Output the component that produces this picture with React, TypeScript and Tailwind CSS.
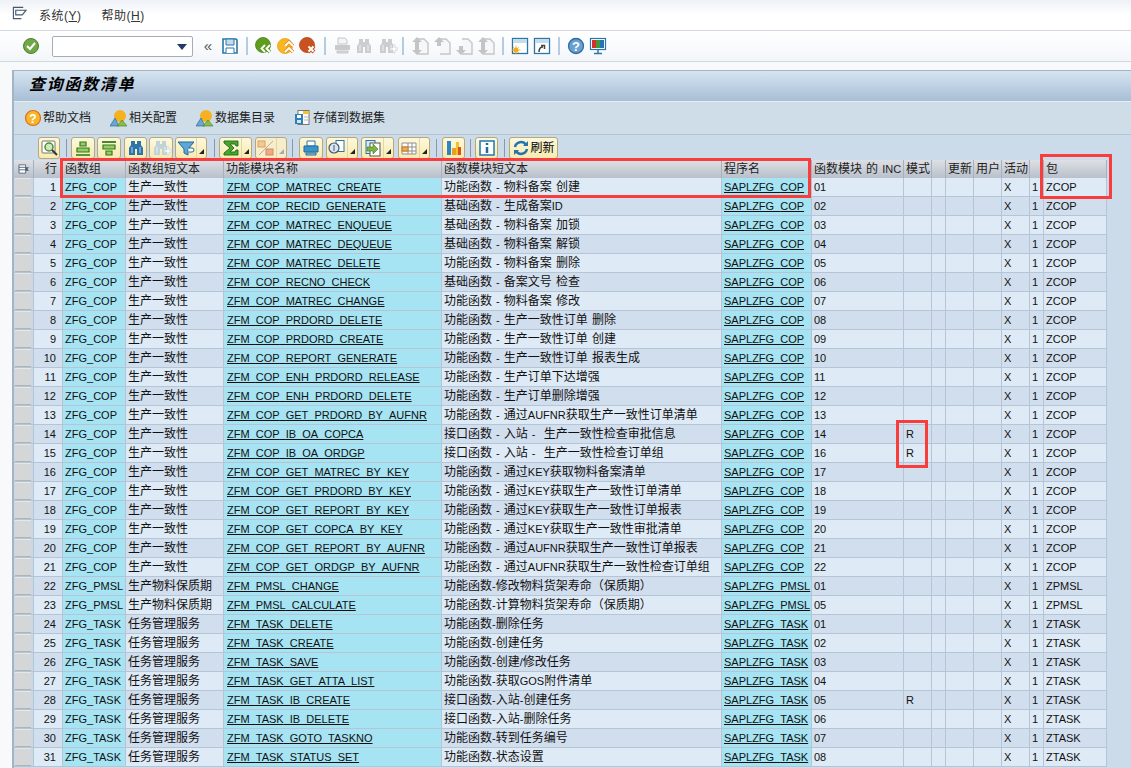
import type { ReactNode } from "react";

const COLS =
  "grid grid-cols-[20px_29px_63px_98px_218px_280px_90px_92px_28px_14px_28px_28px_28px_14px_63px] w-[1093px]";

const HEADERS = ["", "行", "函数组", "函数组短文本", "功能模块名称", "函数模块短文本", "程序名", "函数模块 的 INC", "模式", "", "更新", "用户", "活动", "", "包"];

type Row = [string, string, string, string, string];

const COP = "COP";
const rows: Row[] = [
  [COP, "MATREC_CREATE", "功能函数 - 物料备案 创建", "01", ""],
  [COP, "RECID_GENERATE", "基础函数 - 生成备案ID", "02", ""],
  [COP, "MATREC_ENQUEUE", "基础函数 - 物料备案 加锁", "03", ""],
  [COP, "MATREC_DEQUEUE", "基础函数 - 物料备案 解锁", "04", ""],
  [COP, "MATREC_DELETE", "功能函数 - 物料备案 删除", "05", ""],
  [COP, "RECNO_CHECK", "基础函数 - 备案文号 检查", "06", ""],
  [COP, "MATREC_CHANGE", "功能函数 - 物料备案 修改", "07", ""],
  [COP, "PRDORD_DELETE", "功能函数 - 生产一致性订单 删除", "08", ""],
  [COP, "PRDORD_CREATE", "功能函数 - 生产一致性订单 创建", "09", ""],
  [COP, "REPORT_GENERATE", "功能函数 - 生产一致性订单 报表生成", "10", ""],
  [COP, "ENH_PRDORD_RELEASE", "功能函数 - 生产订单下达增强", "11", ""],
  [COP, "ENH_PRDORD_DELETE", "功能函数 - 生产订单删除增强", "12", ""],
  [COP, "GET_PRDORD_BY_AUFNR", "功能函数 - 通过AUFNR获取生产一致性订单清单", "13", ""],
  [COP, "IB_OA_COPCA", "接口函数 - 入站 -  生产一致性检查审批信息", "14", "R"],
  [COP, "IB_OA_ORDGP", "接口函数 - 入站 -  生产一致性检查订单组", "16", "R"],
  [COP, "GET_MATREC_BY_KEY", "功能函数 - 通过KEY获取物料备案清单", "17", ""],
  [COP, "GET_PRDORD_BY_KEY", "功能函数 - 通过KEY获取生产一致性订单清单", "18", ""],
  [COP, "GET_REPORT_BY_KEY", "功能函数 - 通过KEY获取生产一致性订单报表", "19", ""],
  [COP, "GET_COPCA_BY_KEY", "功能函数 - 通过KEY获取生产一致性审批清单", "20", ""],
  [COP, "GET_REPORT_BY_AUFNR", "功能函数 - 通过AUFNR获取生产一致性订单报表", "21", ""],
  [COP, "GET_ORDGP_BY_AUFNR", "功能函数 - 通过AUFNR获取生产一致性检查订单组", "22", ""],
  ["PMSL", "CHANGE", "功能函数-修改物料货架寿命（保质期）", "01", ""],
  ["PMSL", "CALCULATE", "功能函数-计算物料货架寿命（保质期）", "05", ""],
  ["TASK", "DELETE", "功能函数-删除任务", "01", ""],
  ["TASK", "CREATE", "功能函数-创建任务", "02", ""],
  ["TASK", "SAVE", "功能函数-创建/修改任务", "03", ""],
  ["TASK", "GET_ATTA_LIST", "功能函数-获取GOS附件清单", "04", ""],
  ["TASK", "IB_CREATE", "接口函数-入站-创建任务", "05", "R"],
  ["TASK", "IB_DELETE", "接口函数-入站-删除任务", "06", ""],
  ["TASK", "GOTO_TASKNO", "功能函数-转到任务编号", "07", ""],
  ["TASK", "STATUS_SET", "功能函数-状态设置", "08", ""],
];

const groupText: Record<string, string> = { COP: "生产一致性", PMSL: "生产物料保质期", TASK: "任务管理服务" };

// latin runs are 11px, chinese runs 12px, like the SAP GUI font
function T({ children }: { children: string }) {
  return (
    <span className="whitespace-pre [word-spacing:1px]">
      {children.split(/([\u4e00-\u9fff（）]+)/).map((s, i) =>
        i % 2 ? (
          <span key={i} className="text-[12px]">
            {s}
          </span>
        ) : (
          <span key={i}>{s}</span>
        ),
      )}
    </span>
  );
}

function Cell({ children, cls = "" }: { children?: ReactNode; cls?: string }) {
  return (
    <div className={`flex items-center overflow-hidden whitespace-pre border-r border-b border-[#b6c5d6] pl-[2px] ${cls}`}>
      {children}
    </div>
  );
}

function Ic({ children }: { children: ReactNode }) {
  return (
    <svg viewBox="0 0 22 22" className="h-[22px] w-[22px] shrink-0">
      {children}
    </svg>
  );
}

const Sep = ({ ml = "ml-[5px]" }: { ml?: string }) => <div className={`h-[18px] w-[2px] shrink-0 bg-[#b4cbe0] ${ml}`} />;

function GrayPage({ up, down }: { up?: boolean; down?: boolean }) {
  return (
    <Ic>
      <path d="M9 4h6l4 4v11H9" fill="#f6f7f8" stroke="#c4c6c8" strokeWidth="1.400" />
      {up && <path d="M8 2l5 5h-3v4H6V7H3z" fill="#c2c4c6" />}
      {down && <path d="M8 20l5-5h-3v-4H6v4H3z" fill="#c2c4c6" />}
    </Ic>
  );
}

function Binoculars({ color, plus, edge }: { color: string; plus?: boolean; edge?: string }) {
  return (
    <Ic>
      <path
        d="M6 4h4v3h2V4h4v4l2 3v7h-6v-6h-2v6H4v-7l2-3z"
        fill={color}
        stroke={edge}
        strokeWidth="1"
      />
      <path d="M7 10v6M15 10v6" stroke="#fff" strokeOpacity=".45" strokeWidth="1.500" />
      {plus && <path d="M14 13h3v-3h2v3h3v2h-3v3h-2v-3h-3z" fill="#fff" stroke={edge ?? color} strokeWidth=".7" />}
    </Ic>
  );
}

function Mountain() {
  return (
    <svg viewBox="0 0 18 18" className="h-[18px] w-[18px] shrink-0">
      <circle cx="10" cy="7" r="6" fill="#f5b120" />
      <path d="M0 17l5-8 4 8z" fill="#6aa8d2" stroke="#1e5d8c" strokeWidth=".6" />
      <path d="M7 17l5-6 5 6z" fill="#86bf4c" stroke="#3f7a1e" strokeWidth=".6" />
    </svg>
  );
}

function Disk() {
  return (
    <svg viewBox="0 0 18 18" className="h-[18px] w-[18px] shrink-0">
      <rect x="4" y="1.500" width="11" height="14" fill="#fbfbfb" stroke="#777" />
      <rect x="9" y="2" width="6" height="3" fill="#f4c430" />
      <rect x="1" y="5" width="8" height="10" fill="#2e7fb5" />
      <rect x="3" y="6" width="4" height="3" fill="#fff" />
      <rect x="3" y="11" width="4" height="3" fill="#cfe4f2" />
      <path d="M10 8h4M10 11h4" stroke="#d9d9d9" strokeWidth="2" />
    </svg>
  );
}

function HelpOrange() {
  return (
    <svg viewBox="0 0 18 18" className="h-[18px] w-[18px] shrink-0">
      <circle cx="9" cy="9" r="7.500" fill="#f8b62a" stroke="#d9701a" strokeWidth="1.200" />
      <text x="9" y="13.500" textAnchor="middle" fontSize="12" fontWeight="700" fill="#fff" fontFamily="Liberation Sans">?</text>
    </svg>
  );
}

function AppBtn({ icon, label, w }: { icon: ReactNode; label: string; w: string }) {
  return (
    <div className={`flex items-center ${w}`}>
      {icon}
      <span className="ml-px text-[12px] text-[#222]">{label}</span>
    </div>
  );
}

function AlvBtn({ children, w, ml = "ml-[2px]", menu, dim }: { children?: ReactNode; w: string; ml?: string; menu?: boolean; dim?: boolean }) {
  return (
    <div
      className={`flex h-[22px] shrink-0 items-center rounded-[3px] border border-[#b9a877] ${dim ? "bg-[#f6eecb]" : "bg-linear-to-b from-[#fdf8dc] to-[#f7ebb0]"} ${w} ${ml}`}
    >
      <div className="flex min-w-0 flex-1 items-center justify-center">{children}</div>
      {menu && (
        <div className="relative h-full w-[10px] border-l border-[#e2d6a6]">
          <div className={`absolute right-[2px] bottom-[4px] h-0 w-0 border-b-[5px] border-l-[5px] border-l-transparent ${dim ? "border-b-[#aaa]" : "border-b-[#222]"}`} />
        </div>
      )}
    </div>
  );
}

const AlvSep = ({ ml }: { ml: string }) => <div className={`h-[18px] w-px shrink-0 bg-[#8d98a4] ${ml}`} />;

function Small({ children }: { children: ReactNode }) {
  return (
    <svg viewBox="0 0 18 18" className="h-[18px] w-[18px] shrink-0">
      {children}
    </svg>
  );
}

function Box({ x, y, w, h }: { x: string; y: string; w: string; h: string }) {
  return <div className={`absolute border-[3px] border-[#f93c3c] ${x} ${y} ${w} ${h}`} />;
}

export default function App() {
  return (
    <div className="relative flex h-[768px] w-[1131px] flex-col overflow-hidden bg-[#f7f9fb] font-['Liberation_Sans','Noto_Sans_CJK_SC',sans-serif] text-[11px] text-[#111]">
      {/* menu bar */}
      <div className="flex h-[31px] shrink-0 items-center border-b border-[#d0d7e1] bg-linear-to-b from-[#eef1f6] via-white to-white pt-[1px] pl-[12px]">
        <svg viewBox="0 0 16 16" className="mb-[4px] h-[15px] w-[15px]">
          <path d="M12 1.500H1.500v12H10M4 4.500h11l-4 5H4z" fill="none" stroke="#44586e" strokeWidth="1.200" />
        </svg>
        <span className="ml-[12px] text-[12px] tracking-[0.5px] text-[#333]">
          系统(<span className="underline">Y</span>)
        </span>
        <span className="ml-[20px] text-[12px] tracking-[0.5px] text-[#333]">
          帮助(<span className="underline">H</span>)
        </span>
      </div>

      {/* system toolbar */}
      <div className="flex h-[31px] shrink-0 items-center border-b border-[#d0d7e1] bg-linear-to-b from-white to-[#f3f6fa] pl-[20px]">
        <Ic>
          <circle cx="11" cy="11" r="7.500" fill="#6fa845" stroke="#4d7f32" />
          <path d="M7 11l3 3 5-6" fill="none" stroke="#fff" strokeWidth="2" />
        </Ic>
        <div className="relative ml-[10px] h-[21px] w-[141px] shrink-0 rounded-[2px] border border-[#a9adb3] bg-white">
          <div className="absolute top-[7px] right-[5px] h-0 w-0 border-x-[5px] border-t-[6px] border-x-transparent border-t-[#1f3c68]" />
        </div>
        <div className="ml-[4px] flex h-[22px] w-[22px] shrink-0 items-center justify-center text-[15px] text-[#555]">«</div>
        <Ic>
          <path d="M4 4h13l1 1v13H4z" fill="#fff" stroke="#2b77a8" strokeWidth="1.600" />
          <path d="M7 4h8v6H7z" fill="#c6dcec" stroke="#2b77a8" />
          <path d="M7 18v-5h8v5" fill="#fff" stroke="#2b77a8" />
        </Ic>
        <Sep />
        <div className="ml-[5px] flex">
          <Ic>
            <circle cx="10" cy="10" r="7.500" fill="#5f9d1f" stroke="#4a7f1a" strokeWidth=".8" />
            <path d="M12 10l-3.500 3.500L12 17M17 10l-3.500 3.500L17 17" fill="none" stroke="#5f9d1f" strokeWidth="3.400" />
            <path d="M12 10l-3.500 3.500L12 17M17 10l-3.500 3.500L17 17" fill="none" stroke="#fff" strokeWidth="1.800" />
          </Ic>
          <Ic>
            <circle cx="10" cy="11" r="7.500" fill="#f8b71f" stroke="#ec9a17" strokeWidth=".8" />
            <path d="M10 11l4-4 4 4M10 17l4-4 4 4" fill="none" stroke="#ee8a1c" strokeWidth="3.400" />
            <path d="M10 11l4-4 4 4M10 17l4-4 4 4" fill="none" stroke="#fff" strokeWidth="1.800" />
          </Ic>
          <Ic>
            <circle cx="10" cy="10" r="7.500" fill="#c9521f" stroke="#ad4518" strokeWidth=".8" />
            <path d="M11 11l6 6M17 11l-6 6" stroke="#c9521f" strokeWidth="4" />
            <path d="M11.500 11.500l5 5M16.500 11.500l-5 5" stroke="#fff" strokeWidth="2" />
          </Ic>
        </div>
        <Sep />
        <div className="ml-[5px] flex">
          <Ic>
            <path d="M7 3h7l2 2v4H7z" fill="#f4f5f6" stroke="#c4c6c8" />
            <path d="M4 10h15v5H4z" fill="#c8cacc" />
            <path d="M6 16h11v2H6z" fill="#d6d8da" stroke="#c4c6c8" />
          </Ic>
          <Binoculars color="#cbcdcf" />
          <div className="ml-px">
            <Binoculars color="#cbcdcf" plus />
          </div>
        </div>
        <Sep ml="ml-[4px]" />
        <div className="ml-[5px] flex">
          <GrayPage up down />
          <GrayPage up />
          <GrayPage down />
          <GrayPage up down />
        </div>
        <Sep />
        <div className="ml-[5px] flex">
          <Ic>
            <rect x="3.500" y="3.500" width="15" height="15" fill="#fff" stroke="#2b77a8" strokeWidth="1.300" />
            <rect x="4" y="4" width="14" height="4" fill="#c6dcec" />
            <circle cx="7" cy="15" r="2.500" fill="#f7a81b" />
            <path d="M7 10.500v9M2.500 15h9M4 12l6 6M10 12l-6 6" stroke="#f7a81b" strokeWidth=".8" />
          </Ic>
          <Ic>
            <rect x="3.500" y="3.500" width="15" height="15" fill="#fff" stroke="#2b77a8" strokeWidth="1.300" />
            <rect x="4" y="4" width="14" height="4" fill="#c6dcec" />
            <path d="M8 17c0-3 1-5 4-5M10 10.500h3.500V14" fill="none" stroke="#444" strokeWidth="1.500" />
          </Ic>
        </div>
        <Sep />
        <div className="ml-[5px] flex">
          <Ic>
            <circle cx="11" cy="11" r="7.500" fill="#6a9fce" stroke="#2b6ea5" strokeWidth="1.300" />
            <text x="11" y="15.500" textAnchor="middle" fontSize="13" fontWeight="700" fill="#fff" fontFamily="Liberation Sans">?</text>
          </Ic>
          <Ic>
            <rect x="3.500" y="3.500" width="15" height="11" fill="#fff" stroke="#2b77a8" strokeWidth="1.200" />
            <rect x="5" y="5" width="4" height="8" fill="#d3302a" />
            <rect x="9" y="5" width="4" height="8" fill="#3f9a3a" />
            <rect x="13" y="5" width="4" height="8" fill="#2b6fb5" />
            <path d="M11 15v3M7 18.500h8" stroke="#2b77a8" strokeWidth="1.500" />
          </Ic>
        </div>
      </div>

      {/* panel */}
      <div className="mt-[8px] ml-[12px] flex min-h-0 flex-1 flex-col border-t border-l-2 border-[#a3b4c7]">
        <div className="flex h-[30px] shrink-0 items-center bg-linear-to-b from-[#d5e4f0] to-[#a8bed6] pb-[2px] pl-[15px]">
          <span className="text-[16px] font-bold tracking-[1.700px] text-black italic">查询函数清单</span>
        </div>
        <div className="flex h-[33px] shrink-0 items-center border-t border-[#e4edf4] bg-[#cfdde9] pl-[10px]">
          <AppBtn icon={<HelpOrange />} label="帮助文档" w="w-[86px]" />
          <AppBtn icon={<Mountain />} label="相关配置" w="w-[86px]" />
          <AppBtn icon={<Mountain />} label="数据集目录" w="w-[98px]" />
          <AppBtn icon={<Disk />} label="存储到数据集" w="w-[100px]" />
        </div>

        {/* grid toolbar */}
        <div className="flex h-[26px] shrink-0 items-center border-t border-[#b6c5d6] bg-[#cbdbea] pl-[24px]">
          <AlvBtn w="w-[22px]" ml="ml-0">
            <Small>
              <rect x="2" y="2" width="13" height="12" rx="1" fill="#fff" stroke="#777" />
              <circle cx="9" cy="8" r="4" fill="#cfe8c0" stroke="#4f8f2a" strokeWidth="1.500" />
              <path d="M12 11l5 5" stroke="#333" strokeWidth="2" />
            </Small>
          </AlvBtn>
          <AlvSep ml="ml-[6px]" />
          <AlvBtn w="w-[24px]" ml="ml-[4px]">
            <Small>
              <path d="M6 3h6v4H6zM3 9h12v4H3z" fill="#9bc962" stroke="#2f7d1e" strokeWidth="1.200" />
              <path d="M2 16h14" stroke="#2f7d1e" strokeWidth="1.600" />
            </Small>
          </AlvBtn>
          <AlvBtn w="w-[24px]">
            <Small>
              <path d="M2 3h14" stroke="#2f7d1e" strokeWidth="1.800" />
              <path d="M3 6h12v4H3zM6 12h6v4H6z" fill="#9bc962" stroke="#2f7d1e" strokeWidth="1.200" />
            </Small>
          </AlvBtn>
          <AlvBtn w="w-[23px]" ml="ml-[3px]">
            <Binoculars color="#2c74ac" />
          </AlvBtn>
          <AlvBtn w="w-[24px]">
            <Binoculars color="#bfd3d8" plus />
          </AlvBtn>
          <AlvBtn w="w-[32px]" menu>
            <Small>
              <path d="M1 3h16l-6 7v6l-4-2v-4z" fill="#5ea8d8" stroke="#1f6a9e" />
              <path d="M11 9h4a2 2 0 010 4h-3" fill="#fff" stroke="#1f6a9e" />
            </Small>
          </AlvBtn>
          <AlvSep ml="ml-[7px]" />
          <AlvBtn w="w-[33px]" ml="ml-[4px]" menu>
            <Small>
              <path d="M2 2h14v5h-2l-1-2H8l4 4-4 4h5l1-2h2v5H2v-2l6-5-6-5z" fill="#49a52c" stroke="#1f6a1e" strokeWidth=".9" />
            </Small>
          </AlvBtn>
          <AlvBtn w="w-[32px]" ml="ml-[3px]" menu dim>
            <Small>
              <rect x="1" y="2" width="7" height="6" fill="#f3c892" stroke="#e0a060" />
              <rect x="9" y="10" width="7" height="6" fill="#eeab86" stroke="#d48a60" />
              <path d="M2 16L16 2" stroke="#b9b09a" />
            </Small>
          </AlvBtn>
          <AlvSep ml="ml-[5px]" />
          <AlvBtn w="w-[24px]" ml="ml-[6px]">
            <Small>
              <path d="M5 2h8v5H5z" fill="#fff" stroke="#2b77a8" />
              <path d="M2 7h14v6H2z" fill="#3c93c8" stroke="#1f6a9e" />
              <path d="M4 14h10v2H4z" fill="#a9cfe8" stroke="#1f6a9e" />
            </Small>
          </AlvBtn>
          <AlvBtn w="w-[32px]" ml="ml-[3px]" menu>
            <Small>
              <rect x="8" y="1.500" width="8" height="11" fill="#fff" stroke="#2b77a8" />
              <circle cx="6" cy="9" r="5" fill="#d9e8f2" stroke="#44586e" strokeWidth="1.200" />
              <path d="M6 6v6" stroke="#44586e" />
            </Small>
          </AlvBtn>
          <AlvBtn w="w-[33px]" ml="ml-[3px]" menu>
            <Small>
              <rect x="2" y="1.500" width="9" height="13" fill="#d9e8f2" stroke="#2b77a8" />
              <rect x="6" y="4" width="10" height="13" fill="#fff" stroke="#555" />
              <path d="M3 8h6V5l5 5-5 5v-3H3z" fill="#7cb342" stroke="#3f7a1e" strokeWidth=".6" />
            </Small>
          </AlvBtn>
          <AlvBtn w="w-[32px]" ml="ml-[4px]" menu>
            <Small>
              <path d="M2 4h14v11H2zM8 4v11M12 4v11M2 8h14M2 12h14" fill="#fff" stroke="#8f8f8f" />
              <rect x="2" y="8" width="6" height="4" fill="#f4a94a" stroke="#c97d20" />
            </Small>
          </AlvBtn>
          <AlvSep ml="ml-[6px]" />
          <AlvBtn w="w-[23px]" ml="ml-[5px]">
            <Small>
              <rect x="2" y="2" width="4" height="14" fill="#2e86c1" />
              <rect x="7" y="9" width="4" height="7" fill="#e8a020" />
              <rect x="11" y="3" width="3" height="13" fill="#f3c12c" />
              <rect x="13" y="8" width="3" height="8" fill="#d9521f" />
            </Small>
          </AlvBtn>
          <AlvSep ml="ml-[5px]" />
          <AlvBtn w="w-[23px]" ml="ml-[4px]">
            <Small>
              <rect x="2" y="2" width="14" height="14" fill="#fff" stroke="#1f77b4" strokeWidth="1.500" />
              <path d="M9 4v2M9 8v6" stroke="#1f6a9e" strokeWidth="2.500" />
            </Small>
          </AlvBtn>
          <AlvSep ml="ml-[6px]" />
          <AlvBtn w="w-[49px]" ml="ml-[4px]">
            <Small>
              <path d="M3 8a6 6 0 0111-2M15 10a6 6 0 01-11 2" fill="none" stroke="#2574b0" strokeWidth="2.500" />
              <path d="M11 7h5V2zM7 11H2v5z" fill="#2574b0" />
            </Small>
            <span className="text-[12px] text-black">刷新</span>
          </AlvBtn>
        </div>

        {/* grid */}
        <div className="min-h-0 flex-1 bg-[#cbdbea]">
          <div className={`${COLS} h-[18px]`}>
            {HEADERS.map((h, i) => (
              <div
                key={i}
                className={`flex items-center overflow-hidden whitespace-nowrap border-r border-[#a8b0bc] bg-linear-to-b from-[#dde0e5] to-[#b9c0cb] text-[#222] ${i === 1 ? "justify-end pr-[5px]" : i === 0 ? "justify-center" : "pl-[2px]"}`}
              >
                {i === 0 ? (
                  <svg viewBox="0 0 14 12" className="h-[10px] w-[12px]">
                    <path d="M1 1h8v10H1zM1 4h8M1 7h8" fill="#fff" stroke="#44586e" />
                    <path d="M9 4h4l-2 2 2 2H9z" fill="#44586e" />
                  </svg>
                ) : (
                  <T>{h}</T>
                )}
              </div>
            ))}
          </div>
          {rows.map((r, idx) => {
            const stripe = idx % 2 === 0 ? "bg-[#deeaf5]" : "bg-[#d1deee]";
            const key = "bg-[#a6e3f3]";
            return (
              <div key={idx} className={`${COLS} h-[19px]`}>
                <div className="flex border-r border-b border-[#b6c5d6] bg-[#c9d7e6] pr-[2px] pl-px">
                  <div className="flex-1 border-t border-b border-t-[#e6e7e9] border-b-[#b0b4ba] bg-[#d5d6d8]" />
                </div>
                <Cell cls={`${stripe} justify-end pr-[6px]`}>{idx + 1}</Cell>
                <Cell cls={key}>ZFG_{r[0]}</Cell>
                <Cell cls={stripe}>
                  <span className="text-[12px]">{groupText[r[0]]}</span>
                </Cell>
                <Cell cls={`${key} pl-[3px]`}>
                  <span className="underline">
                    ZFM_{r[0]}_{r[1]}
                  </span>
                </Cell>
                <Cell cls={stripe}>
                  <T>{r[2]}</T>
                </Cell>
                <Cell cls={key}>
                  <span className="underline">SAPLZFG_{r[0]}</span>
                </Cell>
                <Cell cls={stripe}>{r[3]}</Cell>
                <Cell cls={stripe}>{r[4]}</Cell>
                <Cell cls={stripe} />
                <Cell cls={stripe} />
                <Cell cls={stripe} />
                <Cell cls={stripe}>X</Cell>
                <Cell cls={`${stripe} justify-end pr-[5px]`}>1</Cell>
                <Cell cls={stripe}>Z{r[0]}</Cell>
              </div>
            );
          })}
        </div>
      </div>

      {/* red annotation boxes drawn over the screenshot */}
      <Box x="left-[60px]" y="top-[158px]" w="w-[751px]" h="h-[40px]" />
      <Box x="left-[1040px]" y="top-[154px]" w="w-[72px]" h="h-[45px]" />
      <Box x="left-[896px]" y="top-[420px]" w="w-[32px]" h="h-[48px]" />
    </div>
  );
}
